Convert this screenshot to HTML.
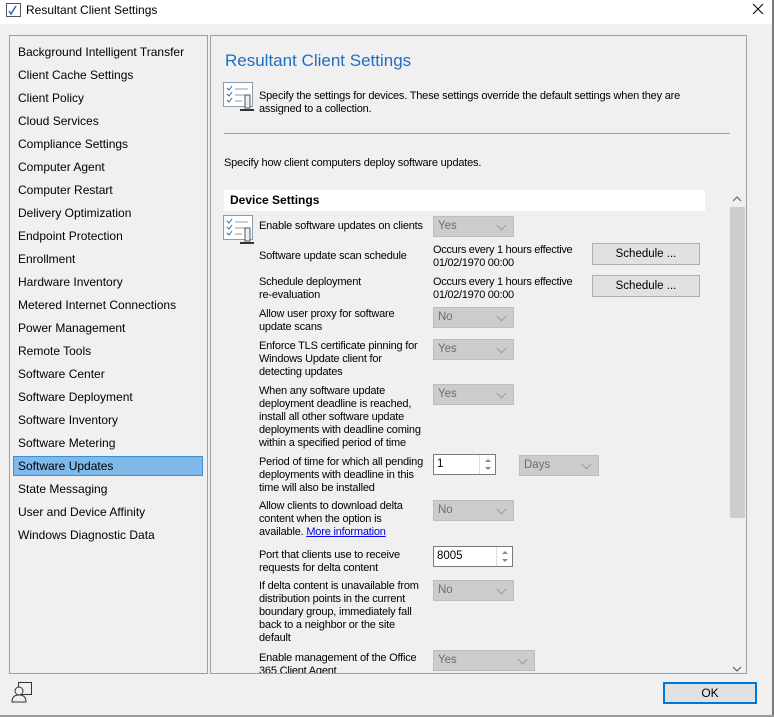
<!DOCTYPE html>
<html><head><meta charset="utf-8">
<style>
*{margin:0;padding:0;box-sizing:border-box}
body{width:774px;height:717px;background:#f0f0f0;font-family:"Liberation Sans",sans-serif;position:relative;overflow:hidden;color:#000}
.a{position:absolute}
.title{left:0;top:0;width:772px;height:24px;background:#fff}
.li{position:absolute;left:18px;font-size:12px;line-height:14px}
.lb{position:absolute;left:259px;font-size:11px;line-height:13px;width:175px;letter-spacing:-0.2px;margin-top:1px}
.cb{position:absolute;background:#cccccc;border:1px solid #bdbdbd;color:#6d6d6d;font-size:11.5px;padding:3px 0 0 4px;height:21px}
.cb:after{content:"";position:absolute;right:8px;top:5px;width:6px;height:6px;border-right:1px solid #9a9a9a;border-bottom:1px solid #9a9a9a;transform:rotate(45deg)}
.btn{position:absolute;left:592px;width:108px;height:22px;background:#e1e1e1;border:1px solid #adadad;font-size:11.5px;text-align:center;line-height:20px}
.val{position:absolute;left:433px;font-size:11px;line-height:13px;letter-spacing:-0.3px;margin-top:1px}
.sp{position:absolute;left:433px;background:#fff;border:1px solid #7a7a7a;height:21px;font-size:11.5px;padding:3px 0 0 3px}
.sp i{position:absolute;right:0;top:0;width:16px;height:19px;border-left:1px solid #ddd}
.sp i:before{content:"";position:absolute;left:5px;top:4px;border:3px solid transparent;border-bottom:3px solid #888;border-top:0}
.sp i:after{content:"";position:absolute;left:5px;top:12px;border:3px solid transparent;border-top:3px solid #888;border-bottom:0}
</style></head><body>
<div class="a title"></div>
<svg class="a" style="left:6px;top:2px" width="16" height="16"><rect x="0.5" y="1.5" width="14" height="13" fill="#fff" stroke="#555"/><path d="M3 9l2 3 5-8" stroke="#1e6fc0" stroke-width="1.5" fill="none"/></svg>
<div class="a" style="left:26px;top:3px;font-size:12px">Resultant Client Settings</div>
<svg class="a" style="left:751px;top:2px" width="14" height="14"><path d="M2 2L12 12M12 2L2 12" stroke="#000" stroke-width="1"/></svg>
<div class="a" style="left:772px;top:0;width:2px;height:717px;background:#7a7a7a"></div>
<div class="a" style="left:0;top:715px;width:774px;height:2px;background:#9a9a9a"></div>

<div class="a" style="left:9px;top:35px;width:199px;height:639px;border:1px solid #a0a0a0;background:#f0f0f0"></div>
<div class="a" style="left:13px;top:456px;width:190px;height:20px;background:#7fb9ea;border:1px solid #3d8fd6"></div>
<div class="li" style="top:45px">Background Intelligent Transfer</div>
<div class="li" style="top:68px">Client Cache Settings</div>
<div class="li" style="top:91px">Client Policy</div>
<div class="li" style="top:114px">Cloud Services</div>
<div class="li" style="top:137px">Compliance Settings</div>
<div class="li" style="top:160px">Computer Agent</div>
<div class="li" style="top:183px">Computer Restart</div>
<div class="li" style="top:206px">Delivery Optimization</div>
<div class="li" style="top:229px">Endpoint Protection</div>
<div class="li" style="top:252px">Enrollment</div>
<div class="li" style="top:275px">Hardware Inventory</div>
<div class="li" style="top:298px">Metered Internet Connections</div>
<div class="li" style="top:321px">Power Management</div>
<div class="li" style="top:344px">Remote Tools</div>
<div class="li" style="top:367px">Software Center</div>
<div class="li" style="top:390px">Software Deployment</div>
<div class="li" style="top:413px">Software Inventory</div>
<div class="li" style="top:436px">Software Metering</div>
<div class="li" style="top:459px">Software Updates</div>
<div class="li" style="top:482px">State Messaging</div>
<div class="li" style="top:505px">User and Device Affinity</div>
<div class="li" style="top:528px">Windows Diagnostic Data</div>

<div class="a" style="left:210px;top:35px;width:537px;height:639px;border:1px solid #a0a0a0"></div>
<div class="a" style="left:225px;top:51px;font-size:17px;color:#1e6fc0">Resultant Client Settings</div>
<svg class="a" style="left:223px;top:82px" width="32" height="32"><rect x="0.5" y="0.5" width="29" height="24" fill="#fff" stroke="#8a9bb0"/><path d="M4 6l2 2 3-4M4 12l2 2 3-4M4 18l2 2 3-4" stroke="#1e6fc0" fill="none"/><path d="M12 7h13M12 13h10M12 19h7" stroke="#999"/><rect x="22" y="13" width="5" height="13" fill="#eee" stroke="#555"/><rect x="17" y="27" width="14" height="2" fill="#333"/></svg>
<div class="a" style="left:259px;top:90px;font-size:11px;line-height:13px;letter-spacing:-0.2px">Specify the settings for devices. These settings override the default settings when they are<br>assigned to a collection.</div>
<div class="a" style="left:224px;top:133px;width:506px;height:1px;background:#a0a0a0"></div>
<div class="a" style="left:224px;top:157px;font-size:11px;letter-spacing:-0.2px">Specify how client computers deploy software updates.</div>

<div class="a" style="left:211px;top:190px;width:534px;height:483px;overflow:hidden">
<div class="a" style="left:13px;top:0;width:481px;height:21px;background:#fff"></div>
<div class="a" style="left:19px;top:3px;font-size:12px;font-weight:bold">Device Settings</div>
<div class="a" style="left:518px;top:2px;width:17px;height:481px;background:#f0f0f0"></div>
<div class="a" style="left:519px;top:17px;width:15px;height:311px;background:#cdcdcd"></div>
<svg class="a" style="left:521px;top:5px" width="10" height="8"><path d="M1 6l4-4 4 4" stroke="#555" fill="none"/></svg>
<svg class="a" style="left:521px;top:475px" width="10" height="8"><path d="M1 2l4 4 4-4" stroke="#555" fill="none"/></svg>
</div>
<svg class="a" style="left:223px;top:215px" width="32" height="32"><rect x="0.5" y="0.5" width="29" height="24" fill="#fff" stroke="#8a9bb0"/><path d="M4 6l2 2 3-4M4 12l2 2 3-4M4 18l2 2 3-4" stroke="#1e6fc0" fill="none"/><path d="M12 7h13M12 13h10M12 19h7" stroke="#999"/><rect x="22" y="13" width="5" height="13" fill="#eee" stroke="#555"/><rect x="17" y="27" width="14" height="2" fill="#333"/></svg>

<div class="lb" style="top:219px">Enable software updates on clients</div>
<div class="cb" style="left:433px;top:216px;width:81px">Yes</div>
<div class="lb" style="top:249px">Software update scan schedule</div>
<div class="val" style="top:243px">Occurs every 1 hours effective<br>01/02/1970 00:00</div>
<div class="btn" style="top:243px">Schedule ...</div>
<div class="lb" style="top:275px">Schedule deployment<br>re-evaluation</div>
<div class="val" style="top:275px">Occurs every 1 hours effective<br>01/02/1970 00:00</div>
<div class="btn" style="top:275px">Schedule ...</div>
<div class="lb" style="top:307px">Allow user proxy for software<br>update scans</div>
<div class="cb" style="left:433px;top:307px;width:81px">No</div>
<div class="lb" style="top:339px">Enforce TLS certificate pinning for<br>Windows Update client for<br>detecting updates</div>
<div class="cb" style="left:433px;top:339px;width:81px">Yes</div>
<div class="lb" style="top:384px">When any software update<br>deployment deadline is reached,<br>install all other software update<br>deployments with deadline coming<br>within a specified period of time</div>
<div class="cb" style="left:433px;top:384px;width:81px">Yes</div>
<div class="lb" style="top:455px">Period of time for which all pending<br>deployments with deadline in this<br>time will also be installed</div>
<div class="sp" style="top:454px;width:63px">1<i></i></div>
<div class="cb" style="left:519px;top:455px;width:80px">Days</div>
<div class="lb" style="top:499px">Allow clients to download delta<br>content when the option is<br>available. <span style="color:#0000ee;text-decoration:underline">More information</span></div>
<div class="cb" style="left:433px;top:500px;width:81px">No</div>
<div class="lb" style="top:548px">Port that clients use to receive<br>requests for delta content</div>
<div class="sp" style="top:546px;width:80px">8005<i></i></div>
<div class="lb" style="top:579px">If delta content is unavailable from<br>distribution points in the current<br>boundary group, immediately fall<br>back to a neighbor or the site<br>default</div>
<div class="cb" style="left:433px;top:580px;width:81px">No</div>
<div class="a" style="left:211px;top:650px;width:518px;height:23px;overflow:hidden">
<div class="lb" style="left:48px;top:1px">Enable management of the Office<br>365 Client Agent</div>
<div class="cb" style="left:222px;top:0;width:102px">Yes</div>
</div>

<svg class="a" style="left:10px;top:681px" width="24" height="24"><rect x="8.5" y="1.5" width="13" height="12" fill="none" stroke="#333"/><circle cx="9" cy="10" r="4" fill="#f0f0f0" stroke="#333"/><path d="M2 21c0-5 3-7 7-7s7 2 7 7z" fill="#f0f0f0" stroke="#333"/></svg>
<div class="a" style="left:663px;top:682px;width:94px;height:22px;background:#e1e1e1;border:2px solid #0078d7;font-size:12px;text-align:center;line-height:18px">OK</div>
</body></html>
